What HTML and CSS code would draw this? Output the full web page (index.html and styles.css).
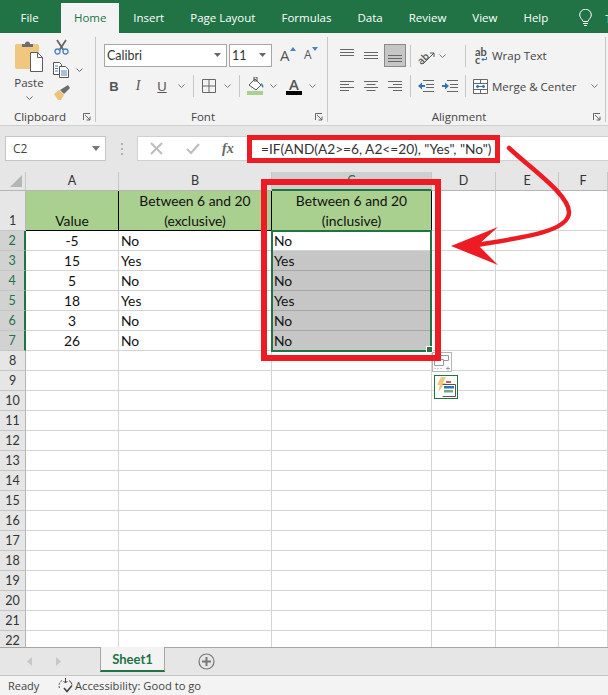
FILE: index.html
```html
<!DOCTYPE html>
<html lang="en">
<head>
<meta charset="utf-8">
<title>Excel</title>
<link rel="stylesheet" href="styles.css">
</head>
<body>
<div class="app">
  <nav class="tabs">
    <span class="tab">File</span>
    <span class="tab active">Home</span>
    <span class="tab">Insert</span>
    <span class="tab">Page Layout</span>
    <span class="tab">Formulas</span>
    <span class="tab">Data</span>
    <span class="tab">Review</span>
    <span class="tab">View</span>
    <span class="tab">Help</span>
    <span class="tell">
      <svg width="13" height="18" viewBox="0 0 13 18" fill="none" stroke="#fff" stroke-width="1"><path d="M4 12.500C3.500 10 .7 9 .7 6a5.800 5.800 0 0 1 11.600 0c0 3-2.800 4-3.300 6.500z"/><path d="M4 14.500h5M5 16.500h3"/></svg>
      <span>Tell me</span>
    </span>
  </nav>

  <section class="ribbon">
    <div class="group g-clip">
      <div class="clip-body">
        <div class="paste">
          <svg width="28" height="31" viewBox="0 0 28 31"><rect x="0" y="3" width="24" height="25" rx="2" fill="#f0c77e"/><path d="M7 6V3h3a2.500 2.500 0 0 1 5 0h3v3z" fill="#6e6e6e"/><path d="M15.500 11.500h7l5 5v14h-12z" fill="#fff" stroke="#5c5c5c"/><path d="M22.500 11.500v5h5" fill="none" stroke="#5c5c5c"/></svg>
          <span class="paste-label">Paste</span>
          <svg class="chev" width="7" height="4" viewBox="0 0 7 4"><path d="M.5.500l3 3 3-3" fill="none" stroke="#666"/></svg>
        </div>
        <div class="clip-tools">
          <svg width="15" height="16" viewBox="0 0 15 16" fill="none"><path d="M3 1l6.500 10M12 1L5.500 11" stroke="#666" stroke-width="1.800"/><circle cx="3.500" cy="12.500" r="2.500" stroke="#4a82c0" stroke-width="1.300"/><circle cx="11.500" cy="12.500" r="2.500" stroke="#4a82c0" stroke-width="1.300"/></svg>
          <div class="copy-row">
            <svg width="16" height="16" viewBox="0 0 16 16" fill="#fff" stroke="#555"><path d="M.5.500h6l2 2v10h-8z"/><path d="M6.500 4.500h6l3 3v8h-9z"/><path d="M2 4h3M2 6.500h3M2 9h3M8 9h6M8 11h6M8 13h6" stroke="#4a82c0" fill="none"/></svg>
            <svg width="7" height="4" viewBox="0 0 7 4"><path d="M.5.500l3 3 3-3" fill="none" stroke="#666"/></svg>
          </div>
          <svg width="17" height="15" viewBox="0 0 17 15"><path d="M0 9l5-4 5 5-3 5H4z" fill="#efc27a"/><path d="M6 5l4 4 6-6-2-3z" fill="#6e6e6e"/></svg>
        </div>
      </div>
      <div class="glabel l-clip"><span>Clipboard</span><svg width="8" height="8" viewBox="0 0 8 8" fill="none" stroke="#666"><path d="M.5 7V.5H7M2 2l5 5M7 3.500V7H3.500"/></svg></div>
    </div>
    <div class="rsep"></div>

    <div class="group g-font">
      <div class="font-body">
        <div class="font-r1">
          <div class="combo c-name"><span>Calibri</span><svg width="7" height="4" viewBox="0 0 7 4"><path d="M0 0h7L3.500 4z" fill="#666"/></svg></div>
          <div class="combo c-size"><span>11</span><svg width="7" height="4" viewBox="0 0 7 4"><path d="M0 0h7L3.500 4z" fill="#666"/></svg></div>
          <span class="grow">A<svg width="6" height="4" viewBox="0 0 6 4"><path d="M0 4l3-4 3 4z" fill="#4a82c0"/></svg></span>
          <span class="shrink">A<svg width="6" height="4" viewBox="0 0 6 4"><path d="M0 0l3 4 3-4z" fill="#4a82c0"/></svg></span>
        </div>
        <div class="font-r2">
          <b class="fmt">B</b>
          <i class="fmt ital">I</i>
          <u class="fmt">U</u>
          <svg width="7" height="4" viewBox="0 0 7 4"><path d="M.5.500l3 3 3-3" fill="none" stroke="#777"/></svg>
          <span class="vsep"></span>
          <svg width="14" height="14" viewBox="0 0 14 14" fill="none" stroke="#666"><path d="M.5.500h13v13H.5zM7 .5v13M.5 7h13"/></svg>
          <svg width="7" height="4" viewBox="0 0 7 4"><path d="M.5.500l3 3 3-3" fill="none" stroke="#777"/></svg>
          <span class="vsep"></span>
          <svg width="17" height="18" viewBox="0 0 17 18"><path d="M2 8l6-6 6 6-5 5z" fill="#fff" stroke="#555"/><path d="M7 0h3v4H7z" fill="none" stroke="#555"/><path d="M14 6c2 1 3 3 2 5-1-1-2-3-2-5z" fill="#2f75b5"/><rect x="0" y="14" width="16" height="4" fill="#a9d08e"/></svg>
          <svg width="7" height="4" viewBox="0 0 7 4"><path d="M.5.500l3 3 3-3" fill="none" stroke="#777"/></svg>
          <span class="colorA">A</span>
          <svg width="7" height="4" viewBox="0 0 7 4"><path d="M.5.500l3 3 3-3" fill="none" stroke="#777"/></svg>
        </div>
      </div>
      <div class="glabel l-font"><span>Font</span><svg width="8" height="8" viewBox="0 0 8 8" fill="none" stroke="#666"><path d="M.5 7V.5H7M2 2l5 5M7 3.500V7H3.500"/></svg></div>
    </div>
    <div class="rsep"></div>

    <div class="group g-align">
      <div class="align-body">
        <div class="al-r1">
          <svg class="up" width="14" height="8" viewBox="0 0 14 8" stroke="#666"><path d="M0 .5h14M0 3.500h14M0 6.500h14"/></svg>
          <svg width="14" height="8" viewBox="0 0 14 8" stroke="#666"><path d="M0 .5h14M0 3.500h14M0 6.500h14"/></svg>
          <span class="pressed"><svg width="14" height="8" viewBox="0 0 14 8" stroke="#666"><path d="M0 .5h14M0 3.500h14M0 6.500h14"/></svg></span>
          <span class="vsep vsep-s"></span>
          <span class="orient"><span class="orient-ab">ab</span><svg width="12" height="12" viewBox="0 0 12 12" fill="none" stroke="#555"><path d="M0 12L11 1M7 1h4v4"/></svg></span>
          <svg width="7" height="4" viewBox="0 0 7 4"><path d="M.5.500l3 3 3-3" fill="none" stroke="#777"/></svg>
          <span class="vsep vsep-e"></span>
          <div class="wide wrap">
            <span class="abc"><span class="abc-line">ab</span><span class="abc-line">c<svg class="abc-arrow" width="6" height="5" viewBox="0 0 6 5" fill="none" stroke="#2f75b5"><path d="M5.500 0v2.500H1M2.500 1L1 2.500 2.500 4"/></svg></span></span>
            <span>Wrap Text</span>
          </div>
        </div>
        <div class="al-r2">
          <svg width="14" height="10" viewBox="0 0 14 10" stroke="#666"><path d="M0 .5h14M0 3.500h9M0 6.500h14M0 9.500h9"/></svg>
          <svg width="14" height="10" viewBox="0 0 14 10" stroke="#666"><path d="M0 .5h14M2.500 3.500h9M0 6.500h14M2.500 9.500h9"/></svg>
          <svg width="14" height="10" viewBox="0 0 14 10" stroke="#666"><path d="M0 .5h14M5 3.500h9M0 6.500h14M5 9.500h9"/></svg>
          <span class="vsep vsep-s"></span>
          <svg width="16" height="12" viewBox="0 0 16 12"><path d="M5 .5h11M8 4.500h8M8 7.500h8M5 11.500h11" stroke="#666"/><path d="M0 6l4-3.500v2.500h3v2H4v2.500z" fill="#2f75b5"/></svg>
          <svg width="16" height="12" viewBox="0 0 16 12"><path d="M5 .5h11M8 4.500h8M8 7.500h8M5 11.500h11" stroke="#666"/><path d="M7 6L3 2.500V5H0v2h3v2.500z" fill="#2f75b5"/></svg>
          <span class="vsep"></span>
          <div class="wide merge">
            <svg width="15" height="15" viewBox="0 0 15 15" fill="#fff" stroke="#666"><path d="M.5.500h14v14H.5zM.5 4.500h14M.5 10.500h14M7.500.5v4M7.500 10.500v4"/><path d="M3 7.500h9M3 7.500l2-1.500v3zM12 7.500l-2-1.500v3z" stroke="#2f75b5"/></svg>
            <span>Merge &amp; Center</span>
            <svg class="mchev" width="7" height="4" viewBox="0 0 7 4"><path d="M.5.500l3 3 3-3" fill="none" stroke="#777"/></svg>
          </div>
        </div>
      </div>
      <div class="glabel l-align"><span>Alignment</span><svg width="8" height="8" viewBox="0 0 8 8" fill="none" stroke="#666"><path d="M.5 7V.5H7M2 2l5 5M7 3.500V7H3.500"/></svg></div>
    </div>
    <div class="rsep"></div>
  </section>

  <section class="fbar">
    <div class="namebox"><span>C2</span><svg width="8" height="5" viewBox="0 0 8 5"><path d="M0 0h8L4 5z" fill="#777"/></svg></div>
    <div class="dots"><i></i><i></i><i></i></div>
    <div class="fbox">
      <svg class="fx-x" width="13" height="13" viewBox="0 0 13 13" stroke="#bdbdbd" stroke-width="2"><path d="M1 1l11 11M12 1L1 12"/></svg>
      <svg class="fx-c" width="14" height="12" viewBox="0 0 14 12" fill="none" stroke="#bdbdbd" stroke-width="2"><path d="M1 6l4 4 8-9"/></svg>
      <em class="fx">fx</em>
      <span class="formula">=IF(AND(A2&gt;=6, A2&lt;=20), "Yes", "No")</span>
    </div>
  </section>

  <section class="sheet">
    <div class="ch corner"><svg width="12" height="12" viewBox="0 0 12 12"><path d="M12 0v12H0z" fill="#b5b5b5"/></svg></div>
    <div class="ch">A</div><div class="ch">B</div><div class="ch ch-sel">C</div><div class="ch">D</div><div class="ch">E</div><div class="ch">F</div>

    <div class="rh rh-tall">1</div>
    <div class="c head mid head-low">Value</div>
    <div class="c head mid">Between 6 and 20<br>(exclusive)</div>
    <div class="c head mid">Between 6 and 20<br>(inclusive)</div>
    <div class="c"></div><div class="c"></div><div class="c"></div>

    <div class="rh rh-sel">2</div><div class="c mid">-5</div><div class="c">No</div><div class="c">No</div><div class="c"></div><div class="c"></div><div class="c"></div>
    <div class="rh rh-sel">3</div><div class="c mid">15</div><div class="c">Yes</div><div class="c gray">Yes</div><div class="c"></div><div class="c"></div><div class="c"></div>
    <div class="rh rh-sel">4</div><div class="c mid">5</div><div class="c">No</div><div class="c gray">No</div><div class="c"></div><div class="c"></div><div class="c"></div>
    <div class="rh rh-sel">5</div><div class="c mid">18</div><div class="c">Yes</div><div class="c gray">Yes</div><div class="c"></div><div class="c"></div><div class="c"></div>
    <div class="rh rh-sel">6</div><div class="c mid">3</div><div class="c">No</div><div class="c gray">No</div><div class="c"></div><div class="c"></div><div class="c"></div>
    <div class="rh rh-sel">7</div><div class="c mid">26</div><div class="c">No</div><div class="c gray">No</div><div class="c"></div><div class="c"></div><div class="c"></div>

    <div class="rh">8</div><div class="c"></div><div class="c"></div><div class="c"></div><div class="c"></div><div class="c"></div><div class="c"></div>
    <div class="rh">9</div><div class="c"></div><div class="c"></div><div class="c"></div><div class="c"></div><div class="c"></div><div class="c"></div>
    <div class="rh">10</div><div class="c"></div><div class="c"></div><div class="c"></div><div class="c"></div><div class="c"></div><div class="c"></div>
    <div class="rh">11</div><div class="c"></div><div class="c"></div><div class="c"></div><div class="c"></div><div class="c"></div><div class="c"></div>
    <div class="rh">12</div><div class="c"></div><div class="c"></div><div class="c"></div><div class="c"></div><div class="c"></div><div class="c"></div>
    <div class="rh">13</div><div class="c"></div><div class="c"></div><div class="c"></div><div class="c"></div><div class="c"></div><div class="c"></div>
    <div class="rh">14</div><div class="c"></div><div class="c"></div><div class="c"></div><div class="c"></div><div class="c"></div><div class="c"></div>
    <div class="rh">15</div><div class="c"></div><div class="c"></div><div class="c"></div><div class="c"></div><div class="c"></div><div class="c"></div>
    <div class="rh">16</div><div class="c"></div><div class="c"></div><div class="c"></div><div class="c"></div><div class="c"></div><div class="c"></div>
    <div class="rh">17</div><div class="c"></div><div class="c"></div><div class="c"></div><div class="c"></div><div class="c"></div><div class="c"></div>
    <div class="rh">18</div><div class="c"></div><div class="c"></div><div class="c"></div><div class="c"></div><div class="c"></div><div class="c"></div>
    <div class="rh">19</div><div class="c"></div><div class="c"></div><div class="c"></div><div class="c"></div><div class="c"></div><div class="c"></div>
    <div class="rh">20</div><div class="c"></div><div class="c"></div><div class="c"></div><div class="c"></div><div class="c"></div><div class="c"></div>
    <div class="rh">21</div><div class="c"></div><div class="c"></div><div class="c"></div><div class="c"></div><div class="c"></div><div class="c"></div>
    <div class="rh">22</div><div class="c"></div><div class="c"></div><div class="c"></div><div class="c"></div><div class="c"></div><div class="c"></div>

    <div class="selection"><span class="handle"></span></div>
    <div class="tag tag-paste">
      <svg width="18" height="18" viewBox="0 0 18 18" fill="none" stroke="#9a9a9a"><path d="M5.500 6.500V2.500h10v5h-5"/><path d="M1.500 6.500h9v6h-9z"/><path d="M1.500 15.500h1M4.500 15.500h1M7.500 15.500h1M13 15.500h4M15 13.500v4" /></svg>
    </div>
    <div class="tag tag-quick">
      <svg width="20" height="20" viewBox="0 0 20 20"><path d="M5 0h5L7 6h3L2 15l2-7H1z" fill="#f0c77e"/><path d="M6.500 7.500h13v12h-13" fill="#fff" stroke="#555"/><rect x="10" y="4" width="5" height="2" fill="#d9534f"/><rect x="8" y="9" width="10" height="2.500" fill="#2f75b5"/><rect x="8" y="13" width="9" height="2.500" fill="#6fa98d"/></svg>
    </div>
  </section>

  <section class="sheetbar">
    <svg class="nav" width="5" height="9" viewBox="0 0 5 9"><path d="M5 0v9L0 4.500z" fill="#c8c8c8"/></svg>
    <svg class="nav nav2" width="5" height="9" viewBox="0 0 5 9"><path d="M0 0v9l5-4.500z" fill="#c8c8c8"/></svg>
    <div class="sheettab">Sheet1</div>
    <svg class="addsheet" width="17" height="17" viewBox="0 0 17 17" fill="none" stroke="#777"><circle cx="8.500" cy="8.500" r="7.500" stroke-width="1.200"/><path d="M4 8.500h9M8.500 4v9" stroke-width="2"/></svg>
  </section>

  <footer class="status">
    <span class="ready">Ready</span>
    <svg class="acc" width="15" height="15" viewBox="0 0 15 15" fill="none" stroke="#444"><path d="M4 2.500A6 6 0 0 0 2 11" stroke-dasharray="2 1.200"/><path d="M7.500 0v5M5.500 3l2 2 2-2M11 2.500a6 6 0 0 1 3 4"/><path d="M6 10l3 3.500 5-6" stroke-width="1.600"/></svg>
    <span class="acc-text">Accessibility: Good to go</span>
  </footer>

  <div class="redbox rb-formula"></div>
  <div class="redbox rb-col"></div>
  <svg class="arrow" width="608" height="695" viewBox="0 0 608 695" fill="none">
    <path d="M509 148C530 168 570 195 569 213C568 232 520 238 476 245" stroke="#ed1c24" stroke-width="4.500" stroke-linecap="round"/>
    <path d="M451 246L498 227L478 245L498 265z" fill="#ed1c24"/>
  </svg>
</div>
</body>
</html>
```
FILE: styles.css
```css
* { box-sizing: border-box; }
html, body { margin: 0; padding: 0; }
body { width: 608px; height: 695px; overflow: hidden; background: #fff; font-family: "Open Sans", "Noto Sans", sans-serif; color: #444; }
svg { display: block; flex: none; }
.app { position: relative; width: 608px; height: 695px; display: flex; flex-direction: column; overflow: hidden; }

/* Tabs */
.tabs { height: 33px; flex: none; background: #217346; display: flex; align-items: flex-end; color: #fff; font-size: 11.500px; white-space: nowrap; overflow: hidden; padding-left: 7.500px; }
.tab { flex: none; height: 30px; line-height: 29px; padding: 0 13px; }
.tab.active { background: #f3f3f3; color: #217346; width: 58px; padding: 0; text-align: center; margin: 0 1px 0 9.500px; }
.tell { flex: none; display: flex; align-items: center; gap: 13px; height: 30px; margin-left: 18px; }

/* Ribbon */
.ribbon { height: 92px; flex: none; background: #f3f3f3; display: flex; font-size: 11.500px; }
.group { display: flex; flex-direction: column; }
.rsep { width: 1px; margin: 4px 0 3px; background: #c6c6c6; flex: none; }
.g-clip { width: 95px; }
.g-font { width: 231px; }
.g-align { width: 277px; }
.glabel { height: 16px; flex: none; display: grid; align-items: center; font-size: 11.500px; line-height: 16px; text-align: center; color: #444; }
.l-clip { grid-template-columns: 1fr 15px; }
.l-font { grid-template-columns: 1fr 17px; }
.l-align { grid-template-columns: 1fr 15px; }
.glabel svg { justify-self: end; margin-right: 4px; }

.clip-body { flex: 1; display: flex; padding: 6px 0 0 4px; }
.paste { width: 50px; display: flex; flex-direction: column; align-items: center; padding-top: 2px; }
.paste-label { margin-top: 2px; line-height: 17px; font-size: 11.500px; }
.chev { margin-top: 5px; }
.clip-tools { display: flex; flex-direction: column; gap: 7px; }
.copy-row { display: flex; align-items: center; gap: 7px; margin-left: -1px; }

.font-body, .align-body { flex: 1; display: flex; flex-direction: column; gap: 9px; padding-top: 11px; }
.font-body { padding-left: 8px; }
.align-body { padding-left: 5px; }
.font-r1 { display: flex; height: 22px; align-items: center; }
.combo { height: 23px; background: #fff; border: 1px solid #a6a6a6; display: flex; align-items: center; justify-content: space-between; font-family: Lato, "Liberation Sans", sans-serif; font-size: 12.500px; color: #333; padding: 0 5px 0 2px; }
.c-name { width: 123px; margin-right: 2px; }
.c-size { width: 43px; margin-right: 8px; }
.grow, .shrink { display: flex; align-items: flex-start; font-family: "Open Sans", sans-serif; color: #555; line-height: 22px; }
.grow { font-size: 15px; width: 24px; }
.shrink { font-size: 12px; }
.grow svg, .shrink svg { margin: 3px 0 0 0; }

.font-r2 { display: grid; height: 22px; align-items: center; justify-items: center; grid-template-columns: 20px 28px 20px 18px 6px 26px 10px 14px 18px 18px 24px 12px; }
.fmt { font-family: "Liberation Sans", sans-serif; font-size: 13px; color: #555; }
.ital { font-family: "Liberation Serif", serif; font-size: 14px; }
.vsep { width: 1px; height: 22px; background: #c6c6c6; }
.vsep-s { justify-self: start; margin-left: 1px; }
.vsep-e { justify-self: end; margin-right: 1px; }
.colorA { font-family: "Open Sans", sans-serif; font-size: 15px; font-weight: 600; line-height: 15px; height: 18px; width: 16px; text-align: center; color: #555; border-bottom: 4px solid #000; }

.al-r1, .al-r2 { display: grid; height: 22px; align-items: center; justify-items: center; }
.al-r1 { grid-template-columns: 28px 20px 28px 7px 20px 12px 19px auto; }
.al-r2 { grid-template-columns: 28px 20px 28px 7px 20px 28px 3px auto; }
.up { margin-bottom: 6px; }
.pressed { width: 22px; height: 23px; background: #c6c6c6; border: 1px solid #8a8a8a; display: flex; align-items: flex-end; justify-content: center; padding-bottom: 3px; }
.orient { display: flex; align-items: flex-end; width: 18px; height: 16px; }
.orient-ab { display: block; width: 10px; font-size: 10px; font-weight: 600; line-height: 10px; color: #555; transform: rotate(-45deg); }
.orient svg { margin-left: -4px; }
.wide { justify-self: start; display: flex; align-items: center; font-size: 11.500px; white-space: nowrap; }
.wrap { padding-left: 8px; gap: 4px; }
.abc { display: flex; flex-direction: column; width: 13px; font-family: Lato, "Liberation Sans", sans-serif; font-size: 11px; color: #555; font-weight: 700; }
.abc-line { display: flex; align-items: center; height: 8px; line-height: 8px; }
.abc-arrow { margin-left: 1px; }
.merge { padding-left: 6px; gap: 4px; }
.mchev { margin-left: 10px; }

/* Formula bar */
.fbar { height: 47px; flex: none; background: #e6e6e6; border-top: 1px solid #d0d0d0; padding-top: 10px; display: flex; align-items: flex-start; }
.namebox { width: 101px; height: 25px; margin-left: 5px; background: #fff; border: 1px solid #c6c6c6; display: flex; align-items: center; justify-content: space-between; padding: 0 5px 0 7px; font-size: 12px; color: #444; }
.dots { width: 31px; height: 25px; display: flex; flex-direction: column; align-items: center; justify-content: center; gap: 3px; }
.dots i { width: 2px; height: 2px; background: #b0b0b0; }
.fbox { flex: 1; height: 25px; background: #fff; border: 1px solid #d0d0d0; border-right: 0; display: flex; align-items: center; padding-left: 12px; }
.fx-c { margin-left: 23px; }
.fx { margin-left: 22px; width: 39px; font-family: "Liberation Serif", serif; font-size: 14px; font-weight: 700; color: #666; }
.formula { font-family: Lato, "Liberation Sans", sans-serif; font-size: 13.700px; color: #333; white-space: nowrap; }

/* Sheet */
.sheet { position: relative; flex: 1; min-height: 0; overflow: hidden; display: grid; background: #fff; grid-template-columns: 26px 93px 153px 160px 64px 63px 49px; grid-template-rows: 19px 40px repeat(21, 20px); font-family: Lato, "Liberation Sans", sans-serif; font-size: 13.850px; color: #111; }
.ch { background: #e6e6e6; border-right: 1px solid #c6c6c6; border-bottom: 1px solid #b5b5b5; text-align: center; line-height: 18px; font-size: 12.500px; color: #333; }
.corner { display: flex; align-items: flex-end; justify-content: flex-end; padding: 0 3px 3px 0; }
.ch-sel { background: #cfcfcf; color: #217346; border-bottom: 2px solid #217346; }
.rh { background: #e6e6e6; border-right: 1px solid #b5b5b5; border-bottom: 1px solid #c6c6c6; text-align: center; line-height: 20px; font-size: 12.500px; color: #333; }
.rh-tall { padding-top: 20px; }
.rh-sel { background: #d2d2d2; color: #217346; border-right: 2px solid #217346; }
.c { border-right: 1px solid #d4d4d4; border-bottom: 1px solid #d4d4d4; line-height: 20px; padding-left: 2px; white-space: nowrap; }
.mid { text-align: center; padding-left: 0; }
.head { background: #a9d08e; border-right: 1px solid #000; border-bottom: 1px solid #000; }
.head-low { padding-top: 20px; }
.gray { background: #c6c6c6; border-bottom-color: #a6a6a6; border-right-color: #c6c6c6; }
.selection { position: absolute; left: 271px; top: 58px; width: 161px; height: 122px; border: 2px solid #217346; }
.handle { position: absolute; right: -3px; bottom: -3px; width: 7px; height: 7px; background: #217346; border: 1px solid #fff; }
.tag { position: absolute; background: #fff; display: flex; align-items: center; justify-content: center; }
.tag-paste { left: 432px; top: 180px; width: 20px; height: 20px; border: 1px solid #b5b5b5; }
.tag-quick { left: 434px; top: 203px; width: 24px; height: 24px; border: 1px solid #217346; }

/* Sheet tabs */
.sheetbar { height: 28px; flex: none; background: #e6e6e6; border-top: 1px solid #a6a6a6; display: flex; align-items: flex-start; }
.nav { margin: 9px 0 0 27px; }
.nav2 { margin-left: 24px; }
.sheettab { width: 65px; height: 25px; margin-left: 39px; margin-top: -1px; background: #f3f3f3; border-left: 1px solid #a6a6a6; border-right: 1px solid #a6a6a6; border-bottom: 2px solid #217346; text-align: center; font-family: Lato, "Liberation Sans", sans-serif; font-weight: 700; font-size: 13px; line-height: 24px; color: #217346; }
.addsheet { margin: 5px 0 0 33px; }

/* Status */
.status { height: 20px; flex: none; background: #f3f3f3; border-top: 1px solid #c6c6c6; display: flex; align-items: center; font-size: 11px; color: #444; padding-left: 8px; white-space: nowrap; }
.ready { width: 49px; }
.acc { margin: 0 2px 0 1px; }
.acc-text { font-size: 11.200px; }

/* Annotations */
.redbox { position: absolute; border: 5px solid #ed1c24; }
.rb-formula { left: 247px; top: 135px; width: 253px; height: 28px; }
.rb-col { left: 261px; top: 179px; width: 180px; height: 182px; border-width: 6px; }
.arrow { position: absolute; left: 0; top: 0; }
```
